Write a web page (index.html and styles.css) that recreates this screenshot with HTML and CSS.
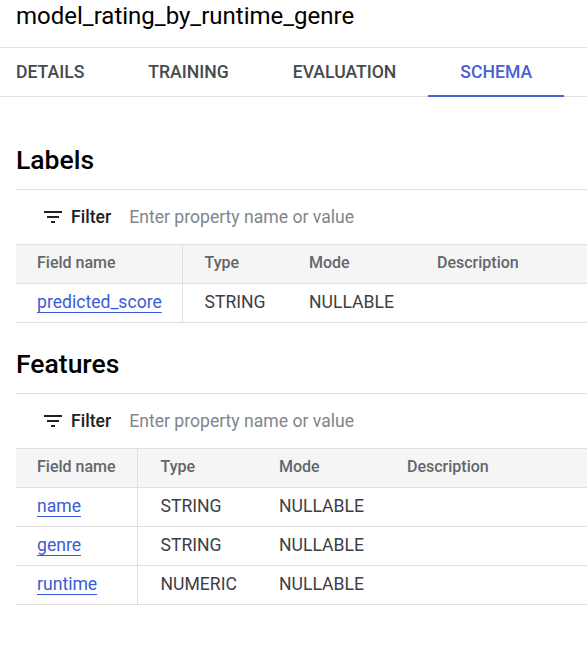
FILE: index.html
```html
<!DOCTYPE html>
<html>
<head>
<meta charset="utf-8">
<link rel="stylesheet" href="styles.css">
</head>
<body>
<div class="title">model_rating_by_runtime_genre</div>
<div class="tabs">
  <div class="tab first">DETAILS</div>
  <div class="tab">TRAINING</div>
  <div class="tab">EVALUATION</div>
  <div class="tab active">SCHEMA</div>
</div>
<div class="content">
  <h2 class="section">Labels</h2>
  <div class="filter">
    <svg class="ficon" viewBox="0 0 24 24" width="24" height="24"><path d="M10 18h4v-2h-4v2zM3 6v2h18V6H3zm3 7h12v-2H6v2z" fill="#202124"/></svg>
    <span class="flabel">Filter</span>
    <span class="fplaceholder">Enter property name or value</span>
  </div>
  <table class="schema t1">
    <colgroup><col class="w1"><col class="w2"><col class="w3"><col></colgroup>
    <thead>
      <tr><th class="c1">Field name</th><th class="c2">Type</th><th>Mode</th><th>Description</th></tr>
    </thead>
    <tbody>
      <tr><td class="c1"><a class="link">predicted_score</a></td><td class="c2">STRING</td><td>NULLABLE</td><td></td></tr>
    </tbody>
  </table>

  <h2 class="section second">Features</h2>
  <div class="filter">
    <svg class="ficon" viewBox="0 0 24 24" width="24" height="24"><path d="M10 18h4v-2h-4v2zM3 6v2h18V6H3zm3 7h12v-2H6v2z" fill="#202124"/></svg>
    <span class="flabel">Filter</span>
    <span class="fplaceholder">Enter property name or value</span>
  </div>
  <table class="schema t2">
    <colgroup><col class="w1"><col class="w2"><col class="w3"><col></colgroup>
    <thead>
      <tr><th class="c1">Field name</th><th class="c2">Type</th><th>Mode</th><th>Description</th></tr>
    </thead>
    <tbody>
      <tr><td class="c1"><a class="link">name</a></td><td class="c2">STRING</td><td>NULLABLE</td><td></td></tr>
      <tr><td class="c1"><a class="link">genre</a></td><td class="c2">STRING</td><td>NULLABLE</td><td></td></tr>
      <tr><td class="c1"><a class="link">runtime</a></td><td class="c2">NUMERIC</td><td>NULLABLE</td><td></td></tr>
    </tbody>
  </table>
</div>
</body>
</html>
```

FILE: styles.css
```css
* { box-sizing: border-box; }
html, body {
  margin: 0;
  padding: 0;
  background: #fff;
  font-family: Roboto, "Noto Sans", sans-serif;
  overflow: hidden;
}
.title {
  height: 48px;
  padding: 2px 16px 0;
  font-size: 24px;
  line-height: 28px;
  color: #000;
  border-bottom: 1px solid #e0e0e0;
}
.tabs {
  display: flex;
  height: 49px;
  border-bottom: 1px solid #e0e0e0;
}
.tab {
  padding: 0 32px;
  height: 48px;
  display: flex;
  align-items: center;
  font-size: 17.6px;
  font-weight: 500;
  color: #464a4e;
}
.tab.first { padding-left: 16px; }
.tab.active {
  color: #4a5fd2;
  border-bottom: 2px solid #4a64d0;
  height: 49px;
  padding-top: 1px;
}
.content {
  padding: 0 0 0 16px;
}
.section {
  margin: 0;
  font-size: 26.5px;
  font-weight: 500;
  color: #000;
  line-height: 32px;
  padding: 47px 0 13px 0;
  border-bottom: 1px solid #e0e0e0;
}
.section.second { padding-top: 25px; }
.filter {
  display: flex;
  align-items: center;
  height: 54px;
  padding-left: 25px;
}
.ficon { display: block; margin-right: 6px; }
.flabel {
  font-size: 17.6px;
  font-weight: 500;
  color: #202124;
  margin-right: 18px;
}
.fplaceholder {
  font-size: 17.6px;
  color: #80868b;
}
.schema {
  width: 100%;
  table-layout: fixed;
  border-collapse: collapse;
  border-top: 1px solid #e0e0e0;
  font-size: 17.6px;
}
.schema tr { height: 39px; }
.schema th, .schema td {
  padding: 0 0 2px 21px;
  text-align: left;
  border-bottom: 1px solid #e0e0e0;
  white-space: nowrap;
}
.schema th {
  padding-bottom: 4px;
  background: #f5f5f5;
  font-weight: 500;
  font-size: 16px;
  color: #63666a;
}
.schema td {
  color: #3c4043;
}
.schema .c1 { border-right: 1px solid #e0e0e0; }
.t1 .w1 { width: 166px; }
.t1 .w2 { width: 106px; }
.t1 .w3 { width: 128px; }
.t1 .c2 { padding-left: 22px; }
.t2 .w1 { width: 121px; }
.t2 .w2 { width: 121px; }
.t2 .w3 { width: 128px; }
.t2 .c2 { padding-left: 23px; }
.link {
  color: #3b5bd6;
  text-decoration: underline;
  text-underline-offset: 4px;
  cursor: pointer;
}
```
